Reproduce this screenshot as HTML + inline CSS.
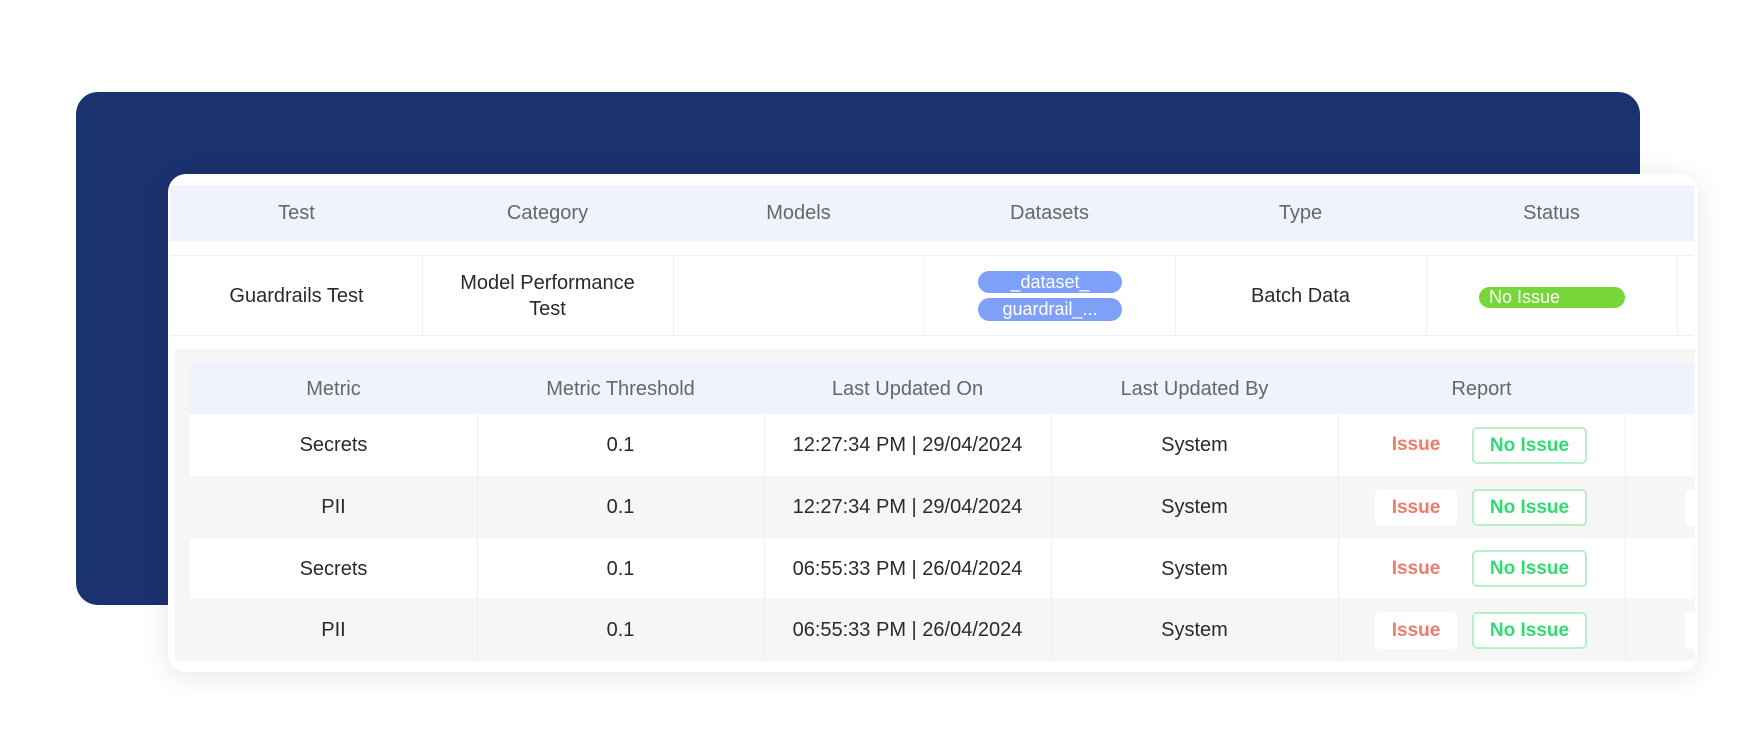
<!DOCTYPE html>
<html><head><meta charset="utf-8"><style>
*{margin:0;padding:0;box-sizing:border-box}
body{width:1756px;height:731px;background:#fff;position:relative;overflow:hidden;font-family:"Liberation Sans",sans-serif}
.blue{position:absolute;left:76px;top:92px;width:1564px;height:513px;background:#1b3270;border-radius:22px}
.card{position:absolute;left:168px;top:174px;width:1530px;height:498px;background:#fff;border-radius:18px;box-shadow:0 4px 30px rgba(0,0,0,.10);overflow:hidden}
.a{position:absolute}
.hdr{left:2px;top:11px;width:1524px;height:56px;background:#eef3fd}
.c{position:absolute;display:flex;align-items:center;justify-content:center;text-align:center}
.h{color:#666;font-size:20px}
.t{color:#2a2a2a;font-size:20px;line-height:26px}
.pill{position:absolute;background:#7ea0f8;color:#fff;border-radius:12px;font-size:18px;line-height:22px;text-align:center}
.panel{left:7px;top:175px;width:1520px;height:312px;background:#f6f6f6}
.sh{left:22px;top:190px;width:1504px;height:50px;background:#eef3fd}
.iss{color:#f27a6a;font-weight:bold;font-size:19px}
.nob{position:absolute;border:2px solid #b5f0c8;border-radius:5px;color:#2fdc72;font-weight:bold;font-size:19px;display:flex;align-items:center;justify-content:center;background:#fff}
</style></head><body>
<div class="blue"></div>
<div class="card">
 <div class="a hdr"></div>
 <div class="c h" style="left:3px;top:11px;width:251px;height:56px">Test</div>
 <div class="c h" style="left:254px;top:11px;width:251px;height:56px">Category</div>
 <div class="c h" style="left:505px;top:11px;width:251px;height:56px">Models</div>
 <div class="c h" style="left:756px;top:11px;width:251px;height:56px">Datasets</div>
 <div class="c h" style="left:1007px;top:11px;width:251px;height:56px">Type</div>
 <div class="c h" style="left:1258px;top:11px;width:251px;height:56px">Status</div>

 <div class="a" style="left:2px;top:81px;width:1524px;height:81px;border-top:1px solid #f0f0f0;border-bottom:1px solid #f0f0f0"></div>
 <div class="a" style="left:254px;top:81px;width:1px;height:81px;background:#f0f0f0"></div>
 <div class="a" style="left:505px;top:81px;width:1px;height:81px;background:#f0f0f0"></div>
 <div class="a" style="left:756px;top:81px;width:1px;height:81px;background:#f0f0f0"></div>
 <div class="a" style="left:1007px;top:81px;width:1px;height:81px;background:#f0f0f0"></div>
 <div class="a" style="left:1258px;top:81px;width:1px;height:81px;background:#f0f0f0"></div>
 <div class="a" style="left:1509px;top:81px;width:1px;height:81px;background:#f0f0f0"></div>
 <div class="c t" style="left:3px;top:81px;width:251px;height:81px">Guardrails Test</div>
 <div class="c t" style="left:254px;top:81px;width:251px;height:81px">Model Performance<br>Test</div>
 <div class="pill" style="left:810px;top:97px;width:144px;height:22px">_dataset_</div>
 <div class="pill" style="left:810px;top:124px;width:144px;height:23px">guardrail_...</div>
 <div class="c t" style="left:1007px;top:81px;width:251px;height:81px">Batch Data</div>
 <div class="a" style="left:1311px;top:113px;width:146px;height:21px;background:#76d63a;border-radius:11px;color:#fff;font-size:18px;line-height:21px;padding-left:10px">No Issue</div>

 <div class="a panel"></div>
 <div class="a sh"></div>
 <div class="c h" style="left:22px;top:190px;width:287px;height:50px">Metric</div>
 <div class="c h" style="left:309px;top:190px;width:287px;height:50px">Metric Threshold</div>
 <div class="c h" style="left:596px;top:190px;width:287px;height:50px">Last Updated On</div>
 <div class="c h" style="left:883px;top:190px;width:287px;height:50px">Last Updated By</div>
 <div class="c h" style="left:1170px;top:190px;width:287px;height:50px">Report</div>

 <div class="a" style="left:22px;top:240px;width:1504px;height:62px;background:#fff"></div>
 <div class="a" style="left:22px;top:302px;width:1504px;height:62px;background:#f6f6f6"></div>
 <div class="a" style="left:22px;top:364px;width:1504px;height:61px;background:#fff"></div>
 <div class="a" style="left:22px;top:425px;width:1504px;height:62px;background:#f6f6f6"></div>
 <div class="a" style="left:309px;top:240px;width:1px;height:247px;background:#eee"></div>
 <div class="a" style="left:596px;top:240px;width:1px;height:247px;background:#eee"></div>
 <div class="a" style="left:883px;top:240px;width:1px;height:247px;background:#eee"></div>
 <div class="a" style="left:1170px;top:240px;width:1px;height:247px;background:#eee"></div>
 <div class="a" style="left:1457px;top:240px;width:1px;height:247px;background:#eee"></div>

 <div class="c t" style="left:22px;top:240px;width:287px;height:62px">Secrets</div>
 <div class="c t" style="left:309px;top:240px;width:287px;height:62px">0.1</div>
 <div class="c t" style="left:596px;top:240px;width:287px;height:62px">12:27:34 PM | 29/04/2024</div>
 <div class="c t" style="left:883px;top:240px;width:287px;height:62px">System</div>
 <div class="c iss" style="left:1207px;top:240px;width:82px;height:62px">Issue</div>
 <div class="nob" style="left:1304px;top:253px;width:115px;height:37px">No Issue</div>

 <div class="c t" style="left:22px;top:302px;width:287px;height:62px">PII</div>
 <div class="c t" style="left:309px;top:302px;width:287px;height:62px">0.1</div>
 <div class="c t" style="left:596px;top:302px;width:287px;height:62px">12:27:34 PM | 29/04/2024</div>
 <div class="c t" style="left:883px;top:302px;width:287px;height:62px">System</div>
 <div class="c iss" style="left:1207px;top:315px;width:82px;height:37px;background:#fff;border-radius:5px">Issue</div>
 <div class="nob" style="left:1304px;top:315px;width:115px;height:37px">No Issue</div>
 <div class="a" style="left:1517px;top:315px;width:20px;height:37px;background:#fff;border-radius:5px"></div>

 <div class="c t" style="left:22px;top:364px;width:287px;height:61px">Secrets</div>
 <div class="c t" style="left:309px;top:364px;width:287px;height:61px">0.1</div>
 <div class="c t" style="left:596px;top:364px;width:287px;height:61px">06:55:33 PM | 26/04/2024</div>
 <div class="c t" style="left:883px;top:364px;width:287px;height:61px">System</div>
 <div class="c iss" style="left:1207px;top:364px;width:82px;height:61px">Issue</div>
 <div class="nob" style="left:1304px;top:376px;width:115px;height:37px">No Issue</div>

 <div class="c t" style="left:22px;top:425px;width:287px;height:62px">PII</div>
 <div class="c t" style="left:309px;top:425px;width:287px;height:62px">0.1</div>
 <div class="c t" style="left:596px;top:425px;width:287px;height:62px">06:55:33 PM | 26/04/2024</div>
 <div class="c t" style="left:883px;top:425px;width:287px;height:62px">System</div>
 <div class="c iss" style="left:1207px;top:438px;width:82px;height:37px;background:#fff;border-radius:5px">Issue</div>
 <div class="nob" style="left:1304px;top:438px;width:115px;height:37px">No Issue</div>
 <div class="a" style="left:1517px;top:438px;width:20px;height:37px;background:#fff;border-radius:5px"></div>
</div>
</body></html>
